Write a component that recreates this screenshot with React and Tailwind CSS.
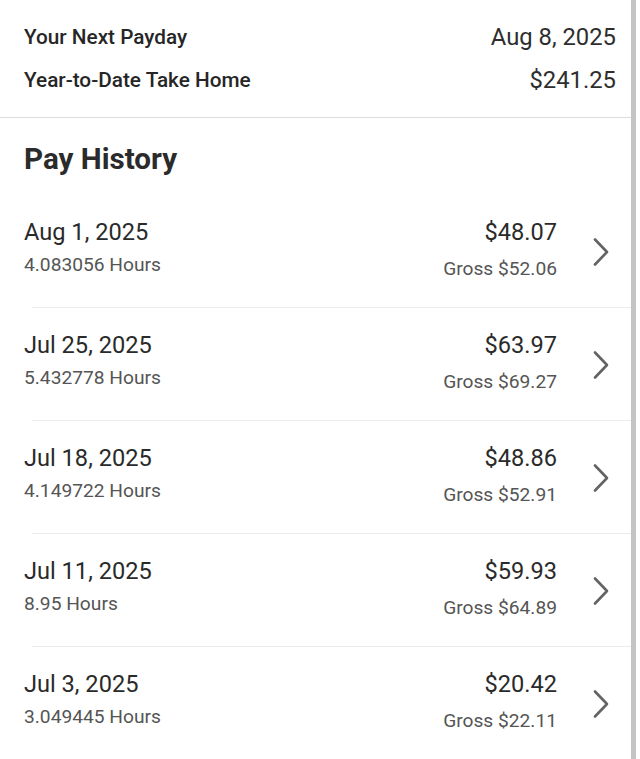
import React from "react";

const rows = [
  { date: "Aug 1, 2025", hours: "4.083056 Hours", net: "$48.07", gross: "Gross $52.06" },
  { date: "Jul 25, 2025", hours: "5.432778 Hours", net: "$63.97", gross: "Gross $69.27" },
  { date: "Jul 18, 2025", hours: "4.149722 Hours", net: "$48.86", gross: "Gross $52.91" },
  { date: "Jul 11, 2025", hours: "8.95 Hours", net: "$59.93", gross: "Gross $64.89" },
  { date: "Jul 3, 2025", hours: "3.049445 Hours", net: "$20.42", gross: "Gross $22.11" },
];

function Chevron() {
  return (
    <svg width="18" height="30" viewBox="0 0 18 30" fill="none" className="shrink-0">
      <path d="M3 2.5 L15 15 L3 27.5" stroke="#636363" strokeWidth="2.6" strokeLinecap="round" strokeLinejoin="round" />
    </svg>
  );
}

export default function App() {
  return (
    <div
      className="relative w-[640px] h-[759px] overflow-hidden bg-white text-[#212121]"
      style={{ fontFamily: "Roboto, 'Noto Sans', sans-serif" }}
    >
      <div className="pr-[9px]">
        <div className="border-b border-[#dcdcdc] pt-[18px] pb-[16px] flex flex-col gap-[3px]">
          <div className="flex justify-between pl-[24px] pr-[15px] h-[40px] items-center">
            <span className="text-[20.75px] font-medium text-[#262626]">Your Next Payday</span>
            <span className="text-[23.8px] text-[#2e2e2e]">Aug 8, 2025</span>
          </div>
          <div className="flex justify-between pl-[24px] pr-[15px] h-[40px] items-center">
            <span className="text-[20.75px] font-medium text-[#262626]">Year-to-Date Take Home</span>
            <span className="text-[23.8px] text-[#2e2e2e]">$241.25</span>
          </div>
        </div>
        <div className="pl-[24px] pt-[21px] pb-[16px]">
          <h2 className="text-[29.6px] font-bold leading-[40px] text-[#2b2b2b]">Pay History</h2>
        </div>
        <div>
          {rows.map((r, i) => (
            <div key={i}>
              <div className="flex items-start h-[112px] pl-[24px]">
                <div className="flex-1 flex flex-col gap-[6px] pt-[22px]">
                  <span className="text-[23.6px] leading-[30px] text-[#2a2a2a]">{r.date}</span>
                  <span className="text-[19.2px] leading-[24px] text-[#555]">{r.hours}</span>
                </div>
                <div className="flex flex-col items-end gap-[10px] pt-[22px]">
                  <span className="text-[23.6px] leading-[30px] text-[#2a2a2a]">{r.net}</span>
                  <span className="text-[19.2px] leading-[24px] text-[#555]">{r.gross}</span>
                </div>
                <div className="self-center ml-[35px] mr-[21px] pt-[1px]">
                  <Chevron />
                </div>
              </div>
              <div className="ml-[32px] h-px bg-[#ebebeb]" />
            </div>
          ))}
        </div>
      </div>
      <div className="absolute top-0 right-[4px] w-[5px] h-full bg-[#c4c4c4]" />
    </div>
  );
}
